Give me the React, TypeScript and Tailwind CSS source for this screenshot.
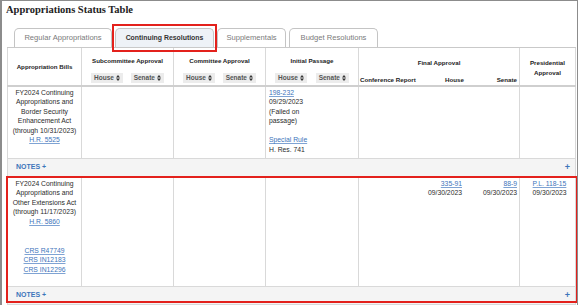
import React from "react";

const cols = "grid grid-cols-[75px_92px_92px_93px_161px_56px]";
const cell = "border-r border-[#d9d9d9]";

function Sort() {
    return (
        <svg width="4" height="6" viewBox="0 0 4 6" className="ml-[2px]">
            <path d="M2 0L4 2.5H0Z M0 3.5H4L2 6Z" fill="#333" />
        </svg>
    );
}

function SortButton({ label }: { label: string }) {
    return (
        <span className="flex items-center h-[10px] px-[3px] bg-[#ececec] text-[6.5px] text-[#555]">
            {label}
            <Sort />
        </span>
    );
}

function Link({ children }: { children: React.ReactNode }) {
    return <span className="text-[#3d74ba] underline decoration-[#7fa3d3]">{children}</span>;
}

function ChamberHeader({ title }: { title: string }) {
    return (
        <div className={`${cell} flex flex-col`}>
            <div className="pt-[7.5px] text-center text-[6.2px] leading-[9px] font-bold text-[#222]">{title}</div>
            <div className="flex justify-between px-[9px] mt-[8.5px]">
                <SortButton label="House" />
                <SortButton label="Senate" />
            </div>
        </div>
    );
}

function NotesRow() {
    return (
        <div className="flex items-center justify-between h-[18px] pl-[8px] pr-[5px] bg-[#f4f4f4] border-x border-b border-[#d9d9d9] text-[#3d74ba] font-bold">
            <span className="text-[7px]">NOTES +</span>
            <span className="text-[9px] leading-none">+</span>
        </div>
    );
}

const tabs = [
    { label: "Regular Appropriations", w: "w-[98px]" },
    { label: "Continuing Resolutions", w: "w-[99px]", active: true },
    { label: "Supplementals", w: "w-[69px]" },
    { label: "Budget Resolutions", w: "w-[89px]" },
];

export default function App() {
    return (
        <div className="relative w-[578px] h-[305px] overflow-hidden bg-white border-l-2 border-t border-r border-[#8c8c8c] font-['Liberation_Sans',Arial,sans-serif] text-[#2b2b2b]">
            <h1 className="pl-[4px] pt-[2px] font-['Liberation_Serif',serif] text-[10.5px] leading-[13px] font-bold text-[#222]">
                Appropriations Status Table
            </h1>

            <div className="ml-[5px] w-[569px] mt-[12px]">
                {/* tabs */}
                <div className="flex gap-[3px] pl-[7px] border-b border-[#c9c9c9]">
                    {tabs.map((t) => (
                        <div
                            key={t.label}
                            className={`${t.w} h-[19px] flex items-center justify-center rounded-t-[5px] border border-b-0 border-[#c4c4c4] ${
                                t.active ? "bg-[#eef2f7] text-[#333] text-[6.9px] font-bold" : "bg-white text-[#7a7a7a] text-[7.6px]"
                            }`}
                        >
                            {t.label}
                        </div>
                    ))}
                </div>

                {/* header */}
                <div className={`${cols} h-[39px] border-b-2 border-[#cfcfcf] text-[6.2px] font-bold text-[#222]`}>
                    <div className={`${cell} border-l flex items-center justify-center`}>Appropriation Bills</div>
                    <ChamberHeader title="Subcommittee Approval" />
                    <ChamberHeader title="Committee Approval" />
                    <ChamberHeader title="Initial Passage" />
                    <div className={`${cell} flex flex-col`}>
                        <div className="pt-[9.5px] text-center leading-[9px]">Final Approval</div>
                        <div className="grid grid-cols-[62px_45px_53px] mt-[8px] leading-[9px]">
                            <span className="pl-[1px]">Conference Report</span>
                            <span className="text-right pr-[2px]">House</span>
                            <span className="text-right pr-[2px]">Senate</span>
                        </div>
                    </div>
                    <div className={`${cell} pt-[9.5px] text-center leading-[10px]`}>
                        Presidential
                        <br />
                        Approval
                    </div>
                </div>

                {/* row 1 */}
                <div className={`${cols} h-[72px] border-b border-[#d9d9d9] text-[6.8px] leading-[9.6px]`}>
                    <div className={`${cell} border-l text-center pt-[0.5px]`}>
                        <div>FY2024 Continuing</div>
                        <div>Appropriations and</div>
                        <div>Border Security</div>
                        <div>Enhancement Act</div>
                        <div>(through 10/31/2023)</div>
                        <div><Link>H.R. 5525</Link></div>
                    </div>
                    <div className={cell} />
                    <div className={cell} />
                    <div className={`${cell} pl-[3px] pt-[0.5px]`}>
                        <div><Link>198-232</Link></div>
                        <div>09/29/2023</div>
                        <div>(Failed on</div>
                        <div>passage)</div>
                        <div>&nbsp;</div>
                        <div><Link>Special Rule</Link></div>
                        <div>H. Res. 741</div>
                    </div>
                    <div className={cell} />
                    <div className={cell} />
                </div>

                <NotesRow />

                {/* row 2 */}
                <div className={`${cols} h-[110px] border-b border-[#d9d9d9] text-[6.8px] leading-[9.6px]`}>
                    <div className={`${cell} border-l text-center pt-[1.5px]`}>
                        <div>FY2024 Continuing</div>
                        <div>Appropriations and</div>
                        <div>Other Extensions Act</div>
                        <div>(through 11/17/2023)</div>
                        <div><Link>H.R. 5860</Link></div>
                        <div>&nbsp;</div>
                        <div>&nbsp;</div>
                        <div><Link>CRS R47749</Link></div>
                        <div><Link>CRS IN12183</Link></div>
                        <div><Link>CRS IN12296</Link></div>
                    </div>
                    <div className={cell} />
                    <div className={cell} />
                    <div className={cell} />
                    <div className={`${cell} grid grid-cols-[62px_45px_53px] content-start pt-[1.5px]`}>
                        <div />
                        <div className="text-right pr-[4px]">
                            <div><Link>335-91</Link></div>
                            <div>09/30/2023</div>
                        </div>
                        <div className="text-right pr-[2px]">
                            <div><Link>88-9</Link></div>
                            <div>09/30/2023</div>
                        </div>
                    </div>
                    <div className={`${cell} text-center pt-[1.5px] pl-[4px]`}>
                        <div><Link>P.L. 118-15</Link></div>
                        <div>09/30/2023</div>
                    </div>
                </div>

                <NotesRow />
            </div>

            {/* highlight boxes */}
            <div className="absolute left-[110px] top-[23px] w-[105px] h-[28px] border-2 border-[#e3211c]" />
            <div className="absolute left-[4px] top-[175px] w-[572px] h-[127px] border-2 border-[#e3211c]" />
        </div>
    );
}
